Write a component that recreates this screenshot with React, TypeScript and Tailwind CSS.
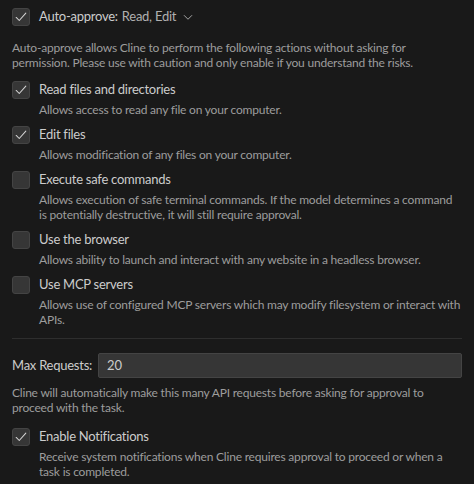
import React from 'react';

type Action = {
  title: string;
  desc: string;
  checked: boolean;
};

const actions: Action[] = [
  { title: 'Read files and directories', desc: 'Allows access to read any file on your computer.', checked: true },
  { title: 'Edit files', desc: 'Allows modification of any files on your computer.', checked: true },
  {
    title: 'Execute safe commands',
    desc: 'Allows execution of safe terminal commands. If the model determines a command is potentially destructive, it will still require approval.',
    checked: false,
  },
  { title: 'Use the browser', desc: 'Allows ability to launch and interact with any website in a headless browser.', checked: false },
  {
    title: 'Use MCP servers',
    desc: 'Allows use of configured MCP servers which may modify filesystem or interact with APIs.',
    checked: false,
  },
];

function Checkbox({ checked }: { checked: boolean }) {
  return (
    <div className="flex h-[18px] w-[18px] shrink-0 items-center justify-center rounded-[3px] border border-[#444444] bg-[#363636]">
      {checked && (
        <svg width="14" height="14" viewBox="0 0 16 16" fill="none">
          <path d="M2.5 8.5 L6 12 L13.5 3.5" stroke="#d4d4d4" strokeWidth="1.2" strokeLinecap="round" strokeLinejoin="round" />
        </svg>
      )}
    </div>
  );
}

function CheckRow({ checked, children }: { checked: boolean; children: React.ReactNode }) {
  return (
    <div className="flex h-5 items-center gap-[9px]">
      <Checkbox checked={checked} />
      <div className="text-[13px] tracking-[-0.25px] text-[#cccccc]">{children}</div>
    </div>
  );
}

export default function App() {
  return (
    <div
      className="h-[484px] w-[474px] overflow-hidden bg-[#191919] px-3 pt-[7px]"
      style={{ fontFamily: 'Lato, "Open Sans", sans-serif' }}
    >
      <CheckRow checked>
        <span className="flex items-center">
          <span>Auto-approve:</span>
          <span className="ml-1 text-[#b0b0b0]">Read, Edit</span>
          <svg className="ml-[6px]" width="12" height="12" viewBox="0 0 16 16" fill="none">
            <path d="M3 6 L8 11 L13 6" stroke="#a8a8a8" strokeWidth="1.3" strokeLinecap="round" strokeLinejoin="round" />
          </svg>
        </span>
      </CheckRow>

      <p className="mt-[13px] text-[12px] leading-[15px] tracking-[-0.2px] text-[#9d9d9d]">
        Auto-approve allows Cline to perform the following actions without asking for permission. Please use with caution and only
        enable if you understand the risks.
      </p>

      <div className="mt-[10px] flex flex-col gap-[8px]">
        {actions.map((a) => (
          <div key={a.title}>
            <CheckRow checked={a.checked}>{a.title}</CheckRow>
            <p className="mt-[2px] pl-[27px] text-[12px] leading-[15px] tracking-[-0.2px] text-[#9d9d9d]">{a.desc}</p>
          </div>
        ))}
      </div>

      <div className="mt-[11px] h-px bg-[#2e2e2e]" />

      <div className="mt-[14px] flex items-center gap-[6px]">
        <span className="text-[13px] tracking-[-0.25px] text-[#cccccc]">Max Requests:</span>
        <div className="flex h-[25px] flex-1 items-center rounded-[2px] border border-[#444444] bg-[#363636] px-2 text-[13px] text-[#cccccc]">
          20
        </div>
      </div>
      <p className="mt-[7px] text-[12px] leading-[15px] tracking-[-0.2px] text-[#9d9d9d]">
        Cline will automatically make this many API requests before asking for approval to proceed with the task.
      </p>

      <div className="mt-[12px]">
        <CheckRow checked>Enable Notifications</CheckRow>
        <p className="mt-[2px] pl-[27px] text-[12px] leading-[15px] tracking-[-0.2px] text-[#9d9d9d]">
          Receive system notifications when Cline requires approval to proceed or when a task is completed.
        </p>
      </div>
    </div>
  );
}
